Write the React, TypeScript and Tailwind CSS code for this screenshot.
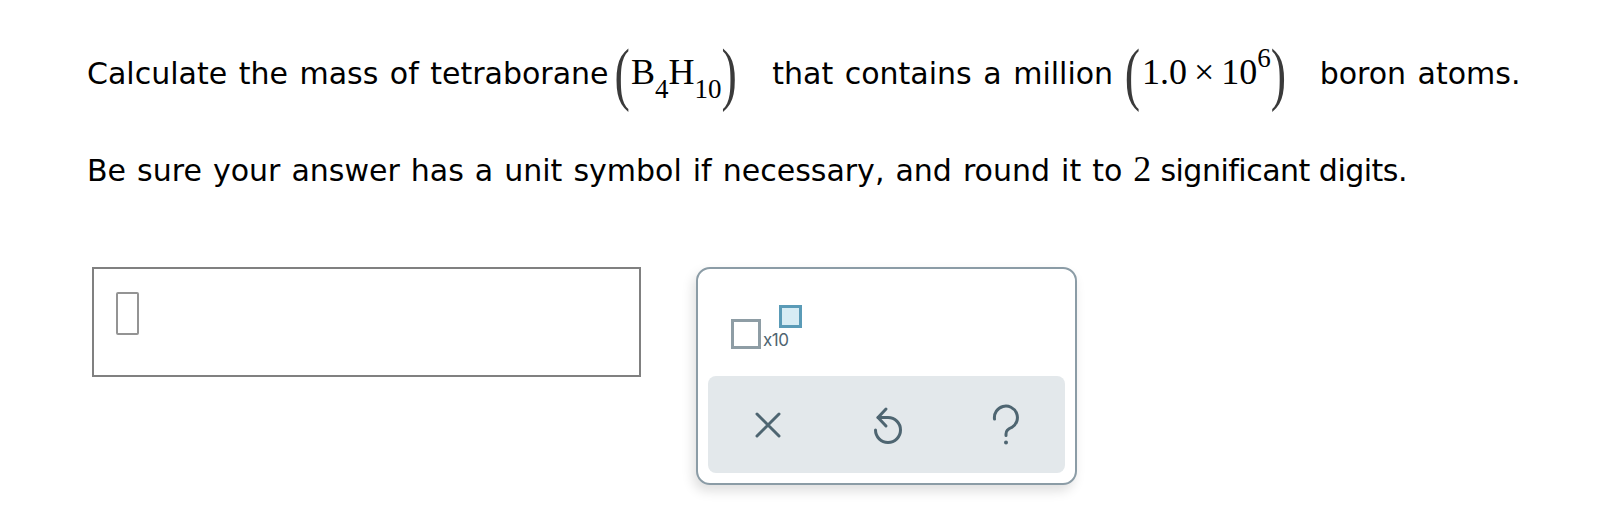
import React from "react";

const Paren = ({ c }: { c: string }) => (
  <span className="inline-block font-['Liberation_Serif',serif] text-[46px] leading-none text-[#3a3a3a] scale-y-[1.5] translate-y-[5px] [word-spacing:0px]">
    {c}
  </span>
);

export default function App() {
  return (
    <div className="w-[1613px] h-[518px] bg-white font-['DejaVu_Sans',sans-serif] text-black pt-[34px] pl-[87px]">
      {/* line 1 */}
      <div className="h-[80px] leading-[80px] text-[30px] whitespace-nowrap [word-spacing:2px]">
        <span>Calculate the mass of tetraborane</span>
        <span className="ml-[6px] font-['Liberation_Serif',serif] text-[36px] leading-none [word-spacing:0px]">
          <Paren c="(" />
          <span className="ml-[1px]">B</span>
          <span className="text-[27px] align-[-14px]">4</span>
          <span>H</span>
          <span className="text-[27px] align-[-14px]">10</span>
          <Paren c=")" />
        </span>
        <span className="ml-[24px]"> that contains a million </span>
        <span className="font-['Liberation_Serif',serif] text-[36px] leading-none [word-spacing:0px]">
          <Paren c="(" />
          <span className="ml-[2px]">1.0</span>
          <span className="mx-[7px]">×</span>
          <span>10</span>
          <span className="text-[27px] align-[17px]">6</span>
          <Paren c=")" />
        </span>
        <span className="ml-[22px]"> boron atoms.</span>
      </div>
      {/* line 2 */}
      <div className="mt-[17px] h-[80px] leading-[80px] text-[30px] whitespace-nowrap [word-spacing:1.5px]">
        <span>Be sure your answer has a unit symbol if necessary, and round it to </span>
        <span className="font-['Liberation_Serif',serif] text-[36px] leading-none">2</span>
        <span className="tracking-[-0.5px] [word-spacing:0px]"> significant digits.</span>
      </div>

      {/* answer row */}
      <div className="mt-[56px] flex items-start">
        <div className="ml-[5px] w-[549px] h-[110px] border-2 border-[#808080] bg-white">
          <div className="ml-[22px] mt-[23px] w-[23px] h-[43px] border-2 border-[#949494] rounded-[2px]" />
        </div>

        <div className="ml-[55px] w-[381px] h-[218px] border-2 border-[#8b9ca6] rounded-[14px] bg-white shadow-[-3px_6px_12px_rgba(0,0,0,0.13)] flex flex-col">
          <div className="h-[107px] pl-[33px] pt-[36px]">
            <div className="flex items-start">
              <div className="mt-[14px] w-[30px] h-[30px] border-[3px] border-[#8e9da5]" />
              <span className="mt-[27px] ml-[2px] font-['Inter',sans-serif] text-[17px] leading-none text-[#4f6470] tracking-[-0.5px]">
                x10
              </span>
              <div className="-ml-[9px] w-[23px] h-[23px] border-[3px] border-[#5a9bb7] bg-[#d7ecf4]" />
            </div>
          </div>
          <div className="mx-[10px] h-[97px] rounded-[8px] bg-[#e3e8eb] grid grid-cols-3 items-center">
            <div className="flex justify-center">
              <svg width="28" height="28" viewBox="0 0 28 28" fill="none" stroke="#4e6571" strokeWidth="3" strokeLinecap="round">
                <path d="M3 3 L25 25 M25 3 L3 25" />
              </svg>
            </div>
            <div className="flex justify-center">
              <svg width="30" height="38" viewBox="0 0 30 38" fill="none" stroke="#4e6571" strokeWidth="3" strokeLinecap="round" strokeLinejoin="round">
                <path d="M6 11.5 H16 A12.5 12.5 0 1 1 3.5 24" />
                <path d="M14 3 L6 11.5 L14 20" />
              </svg>
            </div>
            <div className="flex justify-center">
              <svg width="30" height="42" viewBox="0 0 30 42" fill="none" stroke="#4e6571" strokeWidth="3" strokeLinecap="round" strokeLinejoin="round">
                <path d="M3.5 15 A11.5 11.5 0 1 1 20.75 23.46 Q15 25.5 15 30 V31.5" />
                <circle cx="15" cy="38.5" r="2" fill="#4e6571" stroke="none" />
              </svg>
            </div>
          </div>
        </div>
      </div>
    </div>
  );
}
